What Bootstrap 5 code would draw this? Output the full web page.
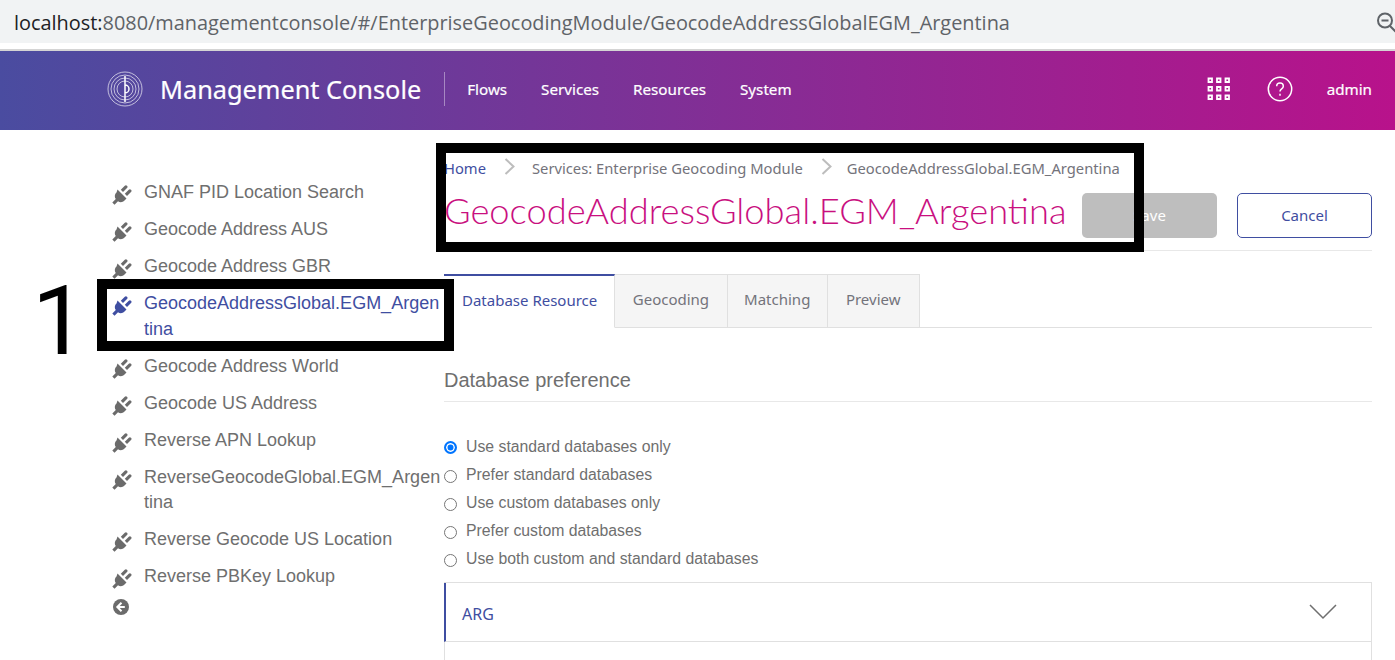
<!DOCTYPE html>
<html lang="en">

<head>
    <meta charset="UTF-8">
    <meta name="viewport" content="width=device-width, initial-scale=1.0">
    <title>Management Console</title>
    <link href="https://cdn.jsdelivr.net/npm/bootstrap@5.3.2/dist/css/bootstrap.min.css" rel="stylesheet">
    <style>
        html, body { height: 660px; overflow: hidden; }
        body { font-family: "Liberation Sans", Arial, sans-serif; color: #6f6f6f; background: #fff; position: relative; }
        .addr-bar { height: 43px; margin-bottom: 6px; background: #f1f3f4; padding-left: 14px; font: 19.9px/46px "Open Sans", sans-serif; color: #5f6368; white-space: nowrap; }
        .addr-bar b { font-weight: 400; color: #202124; }
        .addr-zoom { right: -6px; top: 11px; }
        .top-head { height: 81px; border-top: 2px solid #d4d4d4; background: linear-gradient(90deg, #4a4ca0 0%, #b8128b 100%); padding: 0 23px 3px 107px; color: #fff; font-family: "Noto Sans", sans-serif; }
        .app-name { font-size: 25.3px; margin-left: 17px; padding-right: 23px; line-height: 34px; border-right: 1px solid rgba(255, 255, 255, .4); -webkit-text-stroke: .2px #fff; }
        .head-link { color: #fff; text-decoration: none; font-size: 15.2px; -webkit-text-stroke: .2px #fff; }
        .head-menu { gap: 34px; margin-left: 22px; }
        .head-help { margin: 0 34px 0 36px; }
        .side-col { width: 444px; flex: none; padding: 50.25px 2px 0 112px; }
        .side-item { display: flex; font-size: 18px; line-height: 25.5px; margin-bottom: 11.5px; color: #6f6f6f; word-break: break-all; }
        .side-item svg { flex: none; margin: 5px 12px 0 0; fill: #6b6b6b; }
        .side-item.is-on { color: #3f4ea1; }
        .side-item.is-on svg { fill: #3f4ea1; }
        .side-back { display: block; margin: -2px 0 0 1px; }
        .main-col { flex: 1; padding-right: 23px; min-width: 0; font-family: "Noto Sans", sans-serif; }
        .crumbs { padding-top: 27px; font-size: 14.75px; line-height: 22px; color: #73737b; white-space: nowrap; }
        .crumbs a { color: #3f4ea1; text-decoration: none; }
        .crumbs svg { margin: 0 17px 3px 18px; }
        .crumbs span + svg { margin-right: 15px; }
        .title-row { height: 70px; border-bottom: 1px solid #e8e8e8; padding-bottom: 12px; margin-top: 2px; }
        .page-title { font-family: Lato, sans-serif; font-size: 36.3px; line-height: 46px; font-weight: 300; color: #c9107f; margin: 0 0 5px; white-space: nowrap; }
        .btn-save, .btn-save:disabled { width: 135px; height: 45px; background: #bebebe; border: 0; color: #fff; font-size: 15px; border-radius: 5px; opacity: 1; }
        .btn-cancel { width: 135px; height: 45px; background: #fff; border: 1px solid #3f4ea1; color: #3f4ea1; font-size: 15px; border-radius: 5px; }
        .btn-gap { gap: 20px; }
        .tab-strip { margin-top: 23px; height: 54px; border-bottom: 1px solid #e0e0e0; }
        .tab-one { padding: 0 17.5px; line-height: 49px; font-size: 15px; color: #73737b; background: #f5f5f5; border: 1px solid #e0e0e0; border-left-width: 0; height: 54px; }
        .tab-one.is-on { color: #3f4ea1; background: #fff; border-top: 2px solid #3f4ea1; border-bottom-color: #fff; padding: 0 17px 0 18px; line-height: 48px; }
        .tab-one:nth-child(3) { padding: 0 16.5px; }
        .tab-one:last-child { padding: 0 19px 0 18px; }
        .sect-title { font-family: "Liberation Sans", Arial, sans-serif; font-size: 20px; line-height: 28px; color: #6f6f6f; margin: 38px 0 0; padding-bottom: 7px; border-bottom: 1px solid #e8e8e8; }
        .radio-list { margin-top: 31px; font-family: "Liberation Sans", Arial, sans-serif; }
        .radio-row { height: 28px; font-size: 15.8px; line-height: 28px; display: flex; align-items: center; margin: 0; }
        .radio-row input { appearance: none; width: 13px; height: 13px; border: 1px solid #767676; border-radius: 50%; margin: 2px 9px 0 0; flex: none; background: #fff; }
        .radio-row input:checked { border: 2px solid #0075ff; box-shadow: inset 0 0 0 1.5px #fff; background: #0075ff; margin-top: 1px; }
        .db-panel { margin-top: 9px; border: 1px solid #e0e0e0; border-bottom: 0; height: 90px; }
        .db-head { height: 59px; border-left: 2px solid #3f4ea1; border-bottom: 1px solid #e0e0e0; padding: 0 34px 0 16px; color: #3f4ea1; font-size: 16px; margin-left: -1px; }
        .db-head span { margin-top: 4px; }
        .mark-box { position: absolute; border: 10px solid #000; pointer-events: none; }
        .mark-a { left: 97px; top: 279px; width: 357px; height: 72px; }
        .mark-b { left: 436px; top: 143px; width: 708px; height: 109px; }
        .mark-num { position: absolute; left: 32px; top: 263px; font: 400 97px/116px Roboto, sans-serif; color: #000; }
    </style>
</head>

<body>
    <svg width="0" height="0" class="position-absolute">
        <defs>
            <symbol id="plug" viewBox="0 0 20 20">
                <path d="M5.500 4.500 14.500 13.500l-2 2c-2 2-4.500 2.200-6.500.7L2.500 19.700.3 17.500l3.500-3.500c-1.500-2-1.300-4.500.7-6.500zM8.800 4.800l4-4a1.500 1.500 0 0 1 2.200 2.200l-4 4zM12.800 8.800l4-4a1.500 1.500 0 0 1 2.200 2.200l-4 4z"/>
            </symbol>
        </defs>
    </svg>

    <div class="addr-bar position-relative"><b>localhost:</b>8080/managementconsole/#/EnterpriseGeocodingModule/GeocodeAddressGlobalEGM_Argentina
        <svg class="addr-zoom position-absolute" width="26" height="26" viewBox="0 0 26 26" fill="none" stroke="#5f6368" stroke-width="2"><circle cx="10" cy="9.500" r="7"/><path d="M6.500 9.500h7M15 15l7 7"/></svg>
    </div>

    <header class="top-head d-flex align-items-center">
        <svg width="36" height="36" viewBox="0 0 36 36" fill="none" stroke="#fff" stroke-opacity=".65">
            <circle cx="18" cy="18" r="17"/><circle cx="18" cy="18" r="14"/><circle cx="18" cy="18" r="11"/><circle cx="18" cy="18" r="8"/>
            <path d="M18 5v17a4 4 0 1 0 0-8M18 31V14a4 4 0 1 1 0 8" stroke-opacity="1" stroke-width="1.500"/>
        </svg>
        <div class="app-name">Management Console</div>
        <nav class="head-menu d-flex">
            <a class="head-link" href="#">Flows</a>
            <a class="head-link" href="#">Services</a>
            <a class="head-link" href="#">Resources</a>
            <a class="head-link" href="#">System</a>
        </nav>
        <div class="ms-auto d-flex align-items-center">
            <svg width="24" height="24" viewBox="0 0 24 24" fill="none" stroke="#fff" stroke-width="1.800">
                <path d="M1.500 1.500h3.500v3.500h-3.500zM10 1.500h3.500v3.500h-3.500zM18.500 1.500h3.500v3.500h-3.500zM1.500 10h3.500v3.500h-3.500zM10 10h3.500v3.500h-3.500zM18.500 10h3.500v3.500h-3.500zM1.500 18.500h3.500v3.500h-3.500zM10 18.500h3.500v3.500h-3.500zM18.500 18.500h3.500v3.500h-3.500z"/>
            </svg>
            <svg class="head-help" width="26" height="26" viewBox="0 0 26 26" fill="none" stroke="#fff" stroke-width="1.500">
                <circle cx="13" cy="13" r="11.700"/>
                <path d="M9.700 10.300c0-4.300 6.600-4.300 6.600 0 0 2.700-3.300 2.400-3.300 5.200M13 17.700v2"/>
            </svg>
            <a class="head-link" href="#">admin</a>
        </div>
    </header>

    <div class="d-flex">
        <aside class="side-col">
            <div class="side-item"><svg width="20" height="20"><use href="#plug"/></svg><span>GNAF PID Location Search</span></div>
            <div class="side-item"><svg width="20" height="20"><use href="#plug"/></svg><span>Geocode Address AUS</span></div>
            <div class="side-item"><svg width="20" height="20"><use href="#plug"/></svg><span>Geocode Address GBR</span></div>
            <div class="side-item is-on"><svg width="20" height="20"><use href="#plug"/></svg><span>GeocodeAddressGlobal.EGM_Argentina</span></div>
            <div class="side-item"><svg width="20" height="20"><use href="#plug"/></svg><span>Geocode Address World</span></div>
            <div class="side-item"><svg width="20" height="20"><use href="#plug"/></svg><span>Geocode US Address</span></div>
            <div class="side-item"><svg width="20" height="20"><use href="#plug"/></svg><span>Reverse APN Lookup</span></div>
            <div class="side-item"><svg width="20" height="20"><use href="#plug"/></svg><span>ReverseGeocodeGlobal.EGM_Argentina</span></div>
            <div class="side-item"><svg width="20" height="20"><use href="#plug"/></svg><span>Reverse Geocode US Location</span></div>
            <div class="side-item"><svg width="20" height="20"><use href="#plug"/></svg><span>Reverse PBKey Lookup</span></div>
            <svg class="side-back" width="16" height="16" viewBox="0 0 16 16">
                <circle cx="8" cy="8" r="8" fill="#6b6b6b"/>
                <path d="M8.500 3.800 4.300 8l4.200 4.200M4.800 8h7" fill="none" stroke="#fff" stroke-width="2"/>
            </svg>
        </aside>

        <main class="main-col">
            <div class="crumbs d-flex align-items-center">
                <a href="#">Home</a>
                <svg width="11" height="17" viewBox="0 0 11 17" fill="none" stroke="#bdbdbd" stroke-width="2"><path d="m1.500 1 8 7.500-8 7.500"/></svg>
                <span>Services: Enterprise Geocoding Module</span>
                <svg width="11" height="17" viewBox="0 0 11 17" fill="none" stroke="#bdbdbd" stroke-width="2"><path d="m1.500 1 8 7.500-8 7.500"/></svg>
                <span>GeocodeAddressGlobal.EGM_Argentina</span>
            </div>
            <div class="title-row d-flex align-items-end">
                <h1 class="page-title">GeocodeAddressGlobal.EGM_Argentina</h1>
                <div class="ms-auto d-flex btn-gap">
                    <button class="btn btn-save" disabled>Save</button>
                    <button class="btn btn-cancel">Cancel</button>
                </div>
            </div>

            <div class="tab-strip d-flex">
                <div class="tab-one is-on">Database Resource</div>
                <div class="tab-one">Geocoding</div>
                <div class="tab-one">Matching</div>
                <div class="tab-one">Preview</div>
            </div>

            <h2 class="sect-title">Database preference</h2>
            <div class="radio-list">
                <label class="radio-row"><input type="radio" name="dbpref" checked>Use standard databases only</label>
                <label class="radio-row"><input type="radio" name="dbpref">Prefer standard databases</label>
                <label class="radio-row"><input type="radio" name="dbpref">Use custom databases only</label>
                <label class="radio-row"><input type="radio" name="dbpref">Prefer custom databases</label>
                <label class="radio-row"><input type="radio" name="dbpref">Use both custom and standard databases</label>
            </div>

            <div class="db-panel">
                <div class="db-head d-flex align-items-center justify-content-between">
                    <span>ARG</span>
                    <svg width="28" height="16" viewBox="0 0 28 16" fill="none" stroke="#6f6f6f" stroke-width="1.500"><path d="m1 1 13 13L27 1"/></svg>
                </div>
            </div>
        </main>
    </div>

    <!-- annotation marks drawn on top of the screenshot -->
    <div class="mark-box mark-a"></div>
    <div class="mark-box mark-b"></div>
    <div class="mark-num">1</div>
</body>

</html>
